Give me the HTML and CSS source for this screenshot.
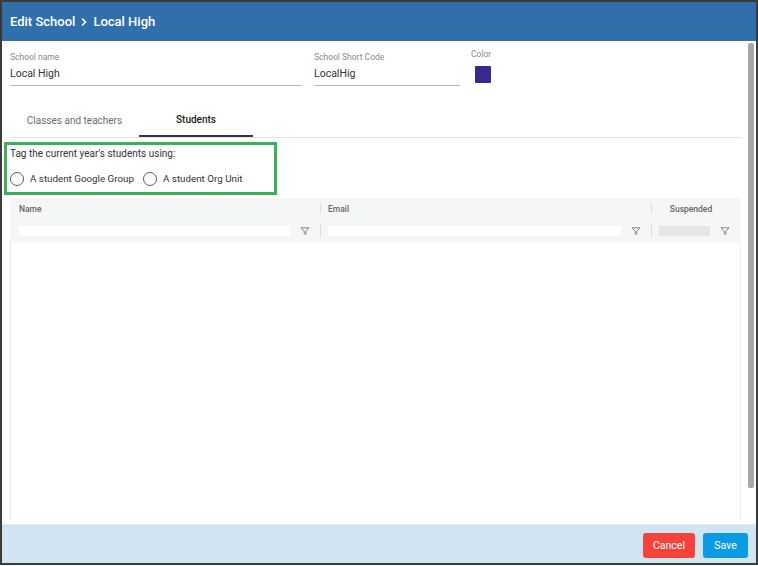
FILE: index.html
```html
<!DOCTYPE html>
<html lang="en">
<head>
  <meta charset="UTF-8">
  <title>Edit School</title>
  <link rel="stylesheet" href="styles.css">
</head>
<body>
  <div class="dialog">
    <div class="dialog-header">
      <span>Edit School</span>
      <svg class="crumb-sep" width="8" height="10" viewBox="0 0 8 10"><polyline points="2,1.5 5.5,5 2,8.5" fill="none" stroke="#fff" stroke-width="1.6"/></svg>
      <span>Local High</span>
    </div>

    <div class="dialog-body">
      <div class="content">
        <div class="fields">
          <div class="field field-name">
            <div class="field-label">School name</div>
            <div class="field-input">Local High</div>
          </div>
          <div class="field field-code">
            <div class="field-label">School Short Code</div>
            <div class="field-input">LocalHig</div>
          </div>
          <div class="field field-color">
            <div class="field-label">Color</div>
            <div class="swatch"></div>
          </div>
        </div>

        <div class="tabs">
          <div class="tab tab-classes">Classes and teachers</div>
          <div class="tab tab-students active">Students</div>
        </div>

        <div class="tag-box">
          <div class="tag-title">Tag the current year's students using:</div>
          <div class="radios">
            <label class="radio"><span class="radio-circle"></span>A student Google Group</label>
            <label class="radio"><span class="radio-circle"></span>A student Org Unit</label>
          </div>
        </div>

        <div class="grid">
          <div class="grid-head">
            <div class="head-row">
              <div class="col col-name">Name</div>
              <div class="col col-email">Email</div>
              <div class="col col-susp">Suspended</div>
            </div>
            <div class="filter-row">
              <div class="col col-name">
                <div class="filter-input"></div>
                <svg class="funnel" width="10" height="10" viewBox="0 0 10 10"><path d="M1 1.8H9L5.8 5.2V8.4L4.2 7.6V5.2Z" fill="none" stroke="#777" stroke-width="0.9" stroke-linejoin="round"/></svg>
              </div>
              <div class="col col-email">
                <div class="filter-input"></div>
                <svg class="funnel" width="10" height="10" viewBox="0 0 10 10"><path d="M1 1.8H9L5.8 5.2V8.4L4.2 7.6V5.2Z" fill="none" stroke="#777" stroke-width="0.9" stroke-linejoin="round"/></svg>
              </div>
              <div class="col col-susp">
                <div class="filter-input disabled"></div>
                <svg class="funnel" width="10" height="10" viewBox="0 0 10 10"><path d="M1 1.8H9L5.8 5.2V8.4L4.2 7.6V5.2Z" fill="none" stroke="#777" stroke-width="0.9" stroke-linejoin="round"/></svg>
              </div>
            </div>
          </div>
          <div class="grid-body"></div>
        </div>
      </div>
      <div class="scrollbar"><div class="thumb"></div></div>
    </div>

    <div class="dialog-footer">
      <button class="btn btn-cancel">Cancel</button>
      <button class="btn btn-save">Save</button>
    </div>
  </div>
</body>
</html>
```

FILE: styles.css
```css
body {
  margin: 0;
  font-family: Roboto, 'Liberation Sans', sans-serif;
  background: #fff;
  color: #333;
}
.dialog {
  width: 758px;
  height: 565px;
  box-sizing: border-box;
  border: 2px solid #3b3b3b;
  display: flex;
  flex-direction: column;
}
.dialog-header {
  height: 39px;
  flex: none;
  background: #316fab;
  color: #fff;
  font-size: 13px;
  font-weight: 500;
  display: flex;
  align-items: center;
  gap: 3px;
  padding: 0 8px;
}
.crumb-sep {
  margin: 0 2px;
}
.dialog-body {
  flex: 1;
  display: flex;
  overflow: hidden;
}
.content {
  flex: 1;
  padding: 10px 6px 0 8px;
  display: flex;
  flex-direction: column;
}
.scrollbar {
  width: 8px;
  flex: none;
  padding-top: 2px;
}
.thumb {
  width: 6px;
  height: 445px;
  background: #a7a7a7;
  border-radius: 2px;
}

/* fields */
.fields {
  display: flex;
  gap: 12px;
}
.field-label {
  font-size: 8.5px;
  line-height: 12px;
  color: #8a8a8a;
}
.field-input {
  font-size: 10.5px;
  line-height: 16px;
  margin-top: 3px;
  padding-bottom: 3px;
  border-bottom: 1px solid #b5b5b5;
  color: #333;
}
.field-name { width: 292px; }
.field-code { width: 146px; }
.field-color {
  margin-top: -3px;
  margin-left: -1px;
}
.swatch {
  width: 16px;
  height: 17px;
  margin: 6px 0 0 4px;
  background: #3b2a8d;
  border-radius: 1px;
}

/* tabs */
.tabs {
  display: flex;
  margin-top: 17px;
  border-bottom: 1px solid #e4e4e4;
}
.tab {
  height: 34px;
  box-sizing: border-box;
  display: flex;
  align-items: center;
  justify-content: center;
  font-size: 10px;
  color: #6b6b6b;
}
.tab-classes { width: 129px; }
.tab-students { width: 114px; }
.tab.active {
  color: #222;
  font-weight: 500;
  border-bottom: 2px solid #2e3752;
}

/* tag box */
.tag-box {
  margin: 4px 0 0 -6px;
  width: 273px;
  box-sizing: border-box;
  border: 3px solid #3fae5a;
  padding: 2px 0 5px 3px;
}
.tag-title {
  font-size: 10px;
  line-height: 14px;
  color: #333;
}
.radios {
  display: flex;
  gap: 9px;
  margin-top: 10px;
}
.radio {
  display: flex;
  align-items: center;
  gap: 6px;
  font-size: 9.8px;
  line-height: 16px;
  color: #333;
}
.radio-circle {
  width: 14px;
  height: 14px;
  box-sizing: border-box;
  border: 1.5px solid #5a5a5a;
  border-radius: 50%;
}

/* grid */
.grid {
  margin-top: 3px;
  width: 731px;
  height: 322px;
  display: flex;
  flex-direction: column;
}
.grid-head {
  background: #f5f7f7;
  height: 45px;
}
.head-row,
.filter-row {
  display: flex;
}
.head-row {
  height: 21px;
  font-size: 8.5px;
  font-weight: 500;
  color: #666;
}
.filter-row {
  height: 24px;
}
.col {
  box-sizing: border-box;
  display: flex;
  align-items: center;
  position: relative;
}
.col + .col::before {
  content: "";
  position: absolute;
  left: 0;
  top: 5px;
  bottom: 5px;
  border-left: 1px solid #dedede;
}
.col-name { width: 310px; padding-left: 9px; }
.col-email { width: 331px; padding-left: 8px; }
.col-susp { width: 90px; padding-left: 8px; }
.head-row .col-susp {
  justify-content: center;
  padding-right: 18px;
}
.filter-row .col { padding-right: 10px; }
.filter-input {
  flex: 1;
  height: 10px;
  margin-right: 10px;
  background: #fff;
}
.filter-input.disabled {
  flex: none;
  width: 51px;
  background: #e6e6e6;
}
.filter-row .col-susp .filter-input { margin-right: 10px; }
.funnel {
  flex: none;
}
.grid-body {
  flex: 1;
  border-left: 1px solid #e6e6e6;
  border-right: 1px solid #eeeeee;
}

/* footer */
.dialog-footer {
  height: 39px;
  flex: none;
  background: #d0e4f2;
  border-top: 1px solid #dcebf6;
  box-sizing: border-box;
  display: flex;
  align-items: center;
  justify-content: flex-end;
  gap: 8px;
  padding: 3px 8px 0 0;
}
.btn {
  height: 25px;
  border: none;
  border-radius: 3px;
  color: #fff;
  font-family: Roboto, 'Liberation Sans', sans-serif;
  font-size: 10.5px;
  padding: 0;
}
.btn-cancel {
  width: 52px;
  background: #f4433b;
}
.btn-save {
  width: 45px;
  background: #0c9be3;
}
```
